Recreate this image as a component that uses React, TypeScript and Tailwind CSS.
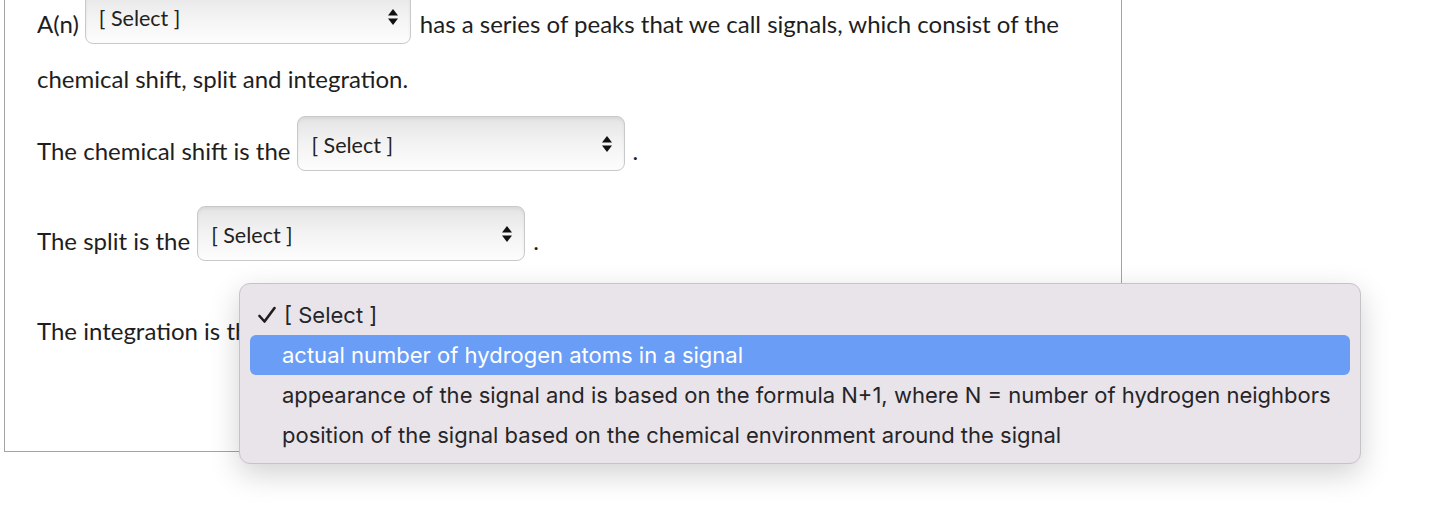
import React from "react";

function FakeSelect({ w = 328 }: { w?: number }) {
  return (
    <div
      className="relative shrink-0 h-[55px] rounded-[8px] border border-[#c9c9c9] bg-gradient-to-b from-[#e4e4e4] via-[#f3f3f3] to-[#fdfdfd] shadow-[inset_0_2px_3px_rgba(0,0,0,0.06)]"
      style={{ width: w }}
    >
      <span className="absolute left-[13px] top-[13px] text-[21.5px] leading-[30px] text-[#222]">
        [ Select ]
      </span>
      <svg className="absolute right-[12px] top-[19px]" width="10" height="16" viewBox="0 0 10 16">
        <path d="M5 0 L10 6.5 L0 6.5 Z" fill="#111" />
        <path d="M0 9.5 L10 9.5 L5 16 Z" fill="#111" />
      </svg>
    </div>
  );
}

export default function App() {
  return (
    <div
      className="relative w-[1456px] h-[508px] bg-white overflow-hidden"
      style={{ fontFamily: "Lato, 'Noto Sans', sans-serif" }}
    >
      <div className="flex flex-col ml-[4px] w-[1118px] h-[452px] border-l border-r border-b border-[#a3a3a3] pl-[32px] text-[24px] leading-[30px] text-[#1e1e1e]">
        <div className="flex items-start mt-[-11px]">
          <span className="mt-[20px] mr-[6px]">A(n)</span>
          <FakeSelect w={326} />
          <span className="mt-[20px] ml-[9px]">
            has a series of peaks that we call signals, which consist of the
          </span>
        </div>
        <div className="mt-[20px]">chemical shift, split and integration.</div>
        <div className="flex items-start mt-[22px]">
          <span className="mt-[20px] mr-[7px]">The chemical shift is the</span>
          <FakeSelect />
          <span className="mt-[20px] ml-[7px]">.</span>
        </div>
        <div className="flex items-start mt-[35px]">
          <span className="mt-[20px] mr-[7px]">The split is the</span>
          <FakeSelect />
          <span className="mt-[20px] ml-[8px]">.</span>
        </div>
        <div className="flex items-start mt-[35px]">
          <span className="mt-[20px] mr-[7px]">The integration is the</span>
          <FakeSelect />
          <span className="mt-[20px] ml-[8px]">.</span>
        </div>
      </div>

      <div
        className="absolute left-[239px] top-[283px] w-[1122px] h-[181px] rounded-[11px] border border-[#c6c3c8] bg-[#e8e4ea] shadow-[0_10px_30px_rgba(0,0,0,0.18)] px-[10px] pt-[11px] text-[22px] leading-[40px] text-[#262427]"
        style={{ fontFamily: "Inter, 'Noto Sans', sans-serif" }}
      >
        <div className="flex items-center h-[40px]">
          <span className="w-[34px] pl-[8px] flex items-center">
            <svg width="18" height="18" viewBox="0 0 18 18">
              <path d="M1.5 10 L6.5 15.5 L16.5 2" fill="none" stroke="#1f1d20" strokeWidth="2.6" strokeLinecap="round" strokeLinejoin="round" />
            </svg>
          </span>
          <span>[ Select ]</span>
        </div>
        <div className="h-[40px] rounded-[6px] bg-[#6a9ef6] text-white pl-[32px]">
          actual number of hydrogen atoms in a signal
        </div>
        <div className="h-[40px] pl-[32px]">
          appearance of the signal and is based on the formula N+1, where N = number of hydrogen neighbors
        </div>
        <div className="h-[40px] pl-[32px]">
          position of the signal based on the chemical environment around the signal
        </div>
      </div>
    </div>
  );
}
